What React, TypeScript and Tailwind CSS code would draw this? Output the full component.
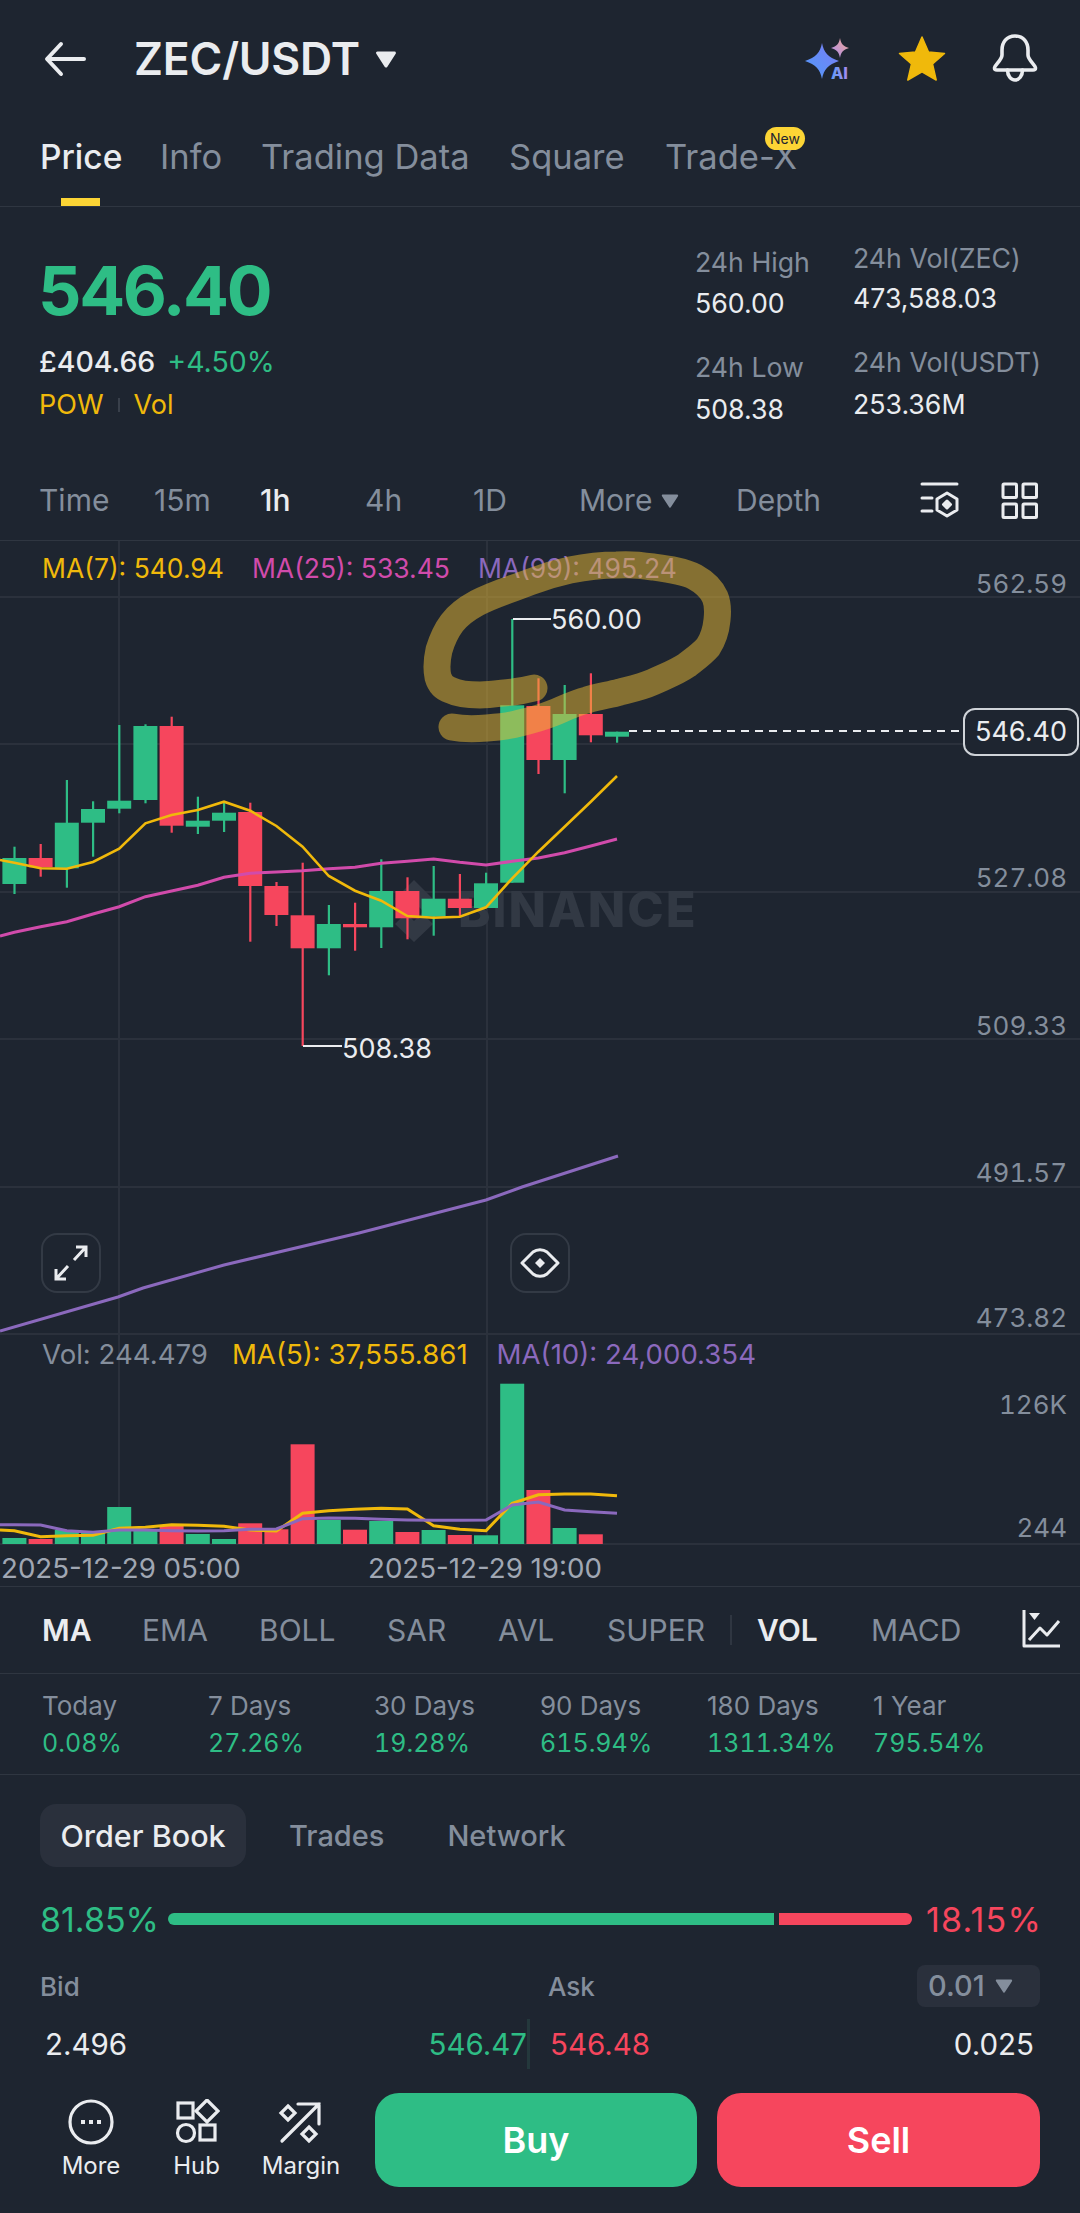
import React from "react"

const GREEN = "#2ebd85"
const RED = "#f6465d"
const YELLOW = "#f0b90b"
const PINK = "#d14bab"
const PURPLE = "#8b69bd"
const GRID = "#2b313c"

const cx = (i: number) => 14.4 + 26.2 * i

// wick top, wick bottom, body top, body bottom, up
const candles: [number, number, number, number, boolean][] = [
  [846.7, 894, 858, 884, true],
  [844, 876.7, 858, 867.3, false],
  [780, 887.7, 822.7, 868.3, true],
  [801.3, 856.7, 809, 822.7, true],
  [725, 813.3, 800.7, 808.7, true],
  [724.3, 803.3, 726, 800, true],
  [716.7, 832.7, 726, 825.7, false],
  [796.7, 834, 820.7, 826.7, true],
  [801.7, 832, 812.7, 820.7, true],
  [802.7, 941.7, 812, 886, false],
  [882, 926, 886, 915, false],
  [862.7, 1046, 915.3, 948.3, false],
  [905, 975.3, 924, 948.3, true],
  [902.7, 950.7, 924, 927.3, false],
  [859.3, 948, 891, 927.3, true],
  [877.3, 939.3, 891, 918.3, false],
  [866, 935.7, 898.7, 916.7, true],
  [874, 916.7, 898.7, 908, false],
  [872.7, 908, 883.3, 908, true],
  [619, 882.7, 705.3, 882.7, true],
  [678.3, 774, 706, 760, false],
  [685, 793.3, 714, 760, true],
  [673.3, 742.3, 714, 735.3, false],
  [731.7, 742.7, 731.7, 736.7, true],
]

const ma7 = [862.7, 868.3, 868.7, 862, 848.7, 823.3, 815, 810, 801.7, 810.7, 826, 846.7, 876, 890.7, 900.7, 916, 917.7, 916.7, 907.3, 878.3, 851.7, 826.7, 801.7, 776]
const ma25 = [932.3, 926.7, 921.7, 914, 906.7, 896.7, 891, 885.3, 877.3, 873.3, 872, 870.7, 868.7, 867.3, 863.3, 861.3, 859, 862.3, 865, 861.3, 858, 852.7, 846, 839]
const volBars = [1538, 1539, 1530, 1531.7, 1507, 1530, 1526, 1534, 1539, 1523.3, 1529.3, 1444.3, 1520, 1529.7, 1521, 1532, 1530, 1535, 1535.3, 1383.7, 1490, 1528, 1534.3]
const volMa5 = [1530.7, 1536.7, 1535.7, 1535.3, 1528.3, 1527.3, 1524.7, 1525.3, 1526.3, 1530, 1531, 1513.3, 1510.7, 1509.3, 1508.3, 1509, 1525.7, 1529.3, 1530.7, 1503.3, 1494.7, 1494, 1494, 1495.7]
const volMa10 = [1524.7, 1525, 1530.7, 1532.3, 1530, 1530, 1530.7, 1531, 1530.7, 1529.3, 1529, 1518.7, 1518, 1518.3, 1519.3, 1520, 1520.3, 1520.3, 1520, 1505, 1502, 1510, 1511.7, 1513.3]

const line = (ys: number[], startY: number) =>
  `0,${startY} ` + ys.map((y, i) => `${cx(i)},${y}`).join(" ")

const highlight =
  "M452 727 C462 729 475 729 487 728 C500 727 510 726 520 723 C533 720 543 717 553 713 C565 708 575 703 587 700 C600 696 610 695 620 692 C632 689 642 687 653 682 C666 676 677 672 687 665 C696 658 702 654 708 647 C714 638 716 630 717 620 C718 611 718 604 715 597 C711 588 704 582 695 577 C684 571 668 569 653 567 C640 565 628 564 617 565 C601 565 585 567 570 570 C556 573 543 577 530 582 C512 589 494 594 477 603 C466 609 458 615 452 623 C446 631 442 640 439 650 C437 659 436 668 438 677 C440 684 444 688 450 690 C458 694 469 695 480 695 C491 695 502 693 513 692 C521 691 530 689 534 688"

const Triangle = ({ className, color }: { className: string; color: string }) => (
  <svg className={className} viewBox="0 0 24 18">
    <path d="M3 2 H21 L12 16 Z" fill={color} stroke={color} strokeWidth="3" strokeLinejoin="round" />
  </svg>
)

const Header = () => (
  <div className="flex h-[118px] items-center pl-[44px]">
    <svg className="h-[36px] w-[44px]" viewBox="0 0 44 36" fill="none" stroke="#eaecef" strokeWidth="4" strokeLinecap="round" strokeLinejoin="round">
      <path d="M40 18 H4 M17 3 L3 18 L17 33" />
    </svg>
    <div className="ml-[46px] text-[44.500px] leading-[50px] font-semibold tracking-[-0.2px] text-[#eaecef]">ZEC/USDT</div>
    <Triangle className="ml-[14px] h-[17px] w-[24px]" color="#eaecef" />
    <svg className="ml-[406px] h-[48px] w-[58px]" viewBox="0 0 58 48">
      <defs>
        <linearGradient id="star1" x1="0" y1="1" x2="1" y2="0">
          <stop offset="0" stopColor="#4f9bf8" />
          <stop offset="1" stopColor="#7b7cf6" />
        </linearGradient>
        <linearGradient id="star2" x1="0" y1="1" x2="1" y2="0">
          <stop offset="0" stopColor="#a98bf4" />
          <stop offset="1" stopColor="#f2a98f" />
        </linearGradient>
        <linearGradient id="aiText" x1="0" y1="0" x2="1" y2="0">
          <stop offset="0" stopColor="#5f9df7" />
          <stop offset="1" stopColor="#a88bf0" />
        </linearGradient>
      </defs>
      <path d="M18 8 C20 18 24 22 35 26 C24 30 20 34 18 44 C16 34 12 30 1 26 C12 22 16 18 18 8 Z" fill="url(#star1)" />
      <path d="M36 3 C37 9 39 11 45 13 C39 15 37 17 36 23 C35 17 33 15 27 13 C33 11 35 9 36 3 Z" fill="url(#star2)" />
      <text x="27" y="44" fontSize="16" fontWeight="800" fill="url(#aiText)">AI</text>
    </svg>
    <svg className="ml-[36px] h-[48px] w-[48px]" viewBox="0 0 48 48">
      <path d="M24 2 L30.5 17 L46.5 18.5 L34.5 29 L38.2 45 L24 36.8 L9.8 45 L13.5 29 L1.5 18.5 L17.5 17 Z" fill={YELLOW} stroke={YELLOW} strokeWidth="1.5" strokeLinejoin="round" />
    </svg>
    <svg className="ml-[45px] h-[52px] w-[48px]" viewBox="0 0 48 52" fill="none" stroke="#eaecef" strokeWidth="3.6" strokeLinecap="round" strokeLinejoin="round">
      <path d="M24 3 C15.5 3 11 9.5 11 17 V22 C11 27 3.5 32 3.5 35 C3.5 36.5 4.5 37 6 37 H42 C43.5 37 44.5 36.5 44.5 35 C44.5 32 37 27 37 22 V17 C37 9.5 32.5 3 24 3 Z" />
      <path d="M16.5 37 C16.5 43 20 47 24 47 C28 47 31.500 43 31.500 37" />
    </svg>
  </div>
)

const Tabs = () => (
  <div className="flex h-[89px] border-b border-[#2f3641] pl-[40px] text-[34.500px] leading-[44px] text-[#848e9c]">
    <div className="flex w-[120px] flex-col pt-[17px]">
      <span className="text-[33.500px] font-medium text-[#eaecef]">Price</span>
      <span className="mt-[19px] ml-[21px] h-[8px] w-[39px] bg-[#fcd535]" />
    </div>
    <div className="w-[101px] pt-[17px]">Info</div>
    <div className="w-[248px] pt-[17px]">Trading Data</div>
    <div className="w-[156px] pt-[17px]">Square</div>
    <div className="relative w-[140px] pt-[17px]">
      Trade-X
      <span className="absolute top-[9px] left-[100px] flex h-[23px] w-[40px] items-center justify-center rounded-full bg-[#fcd535] text-[14px] leading-none text-[#1e2530]">New</span>
    </div>
  </div>
)

const Stats = () => (
  <div className="flex h-[254px] text-[26.700px] leading-[36px]">
    <div className="w-[695px] pl-[38px] text-[28.500px]">
      <div className="mt-[47px] text-[68px] leading-[72px] font-bold tracking-[-2.300px] text-[#2ebd85]">546.40</div>
      <div className="mt-[18px] ml-[1px] flex">
        <span className="font-medium text-[#eaecef]">£404.66</span>
        <span className="ml-[12px] text-[#2ebd85]">+4.50%</span>
      </div>
      <div className="mt-[7px] ml-[1px] flex items-center text-[27px] text-[#f0b90b]">
        <span>POW</span>
        <span className="mx-[14px] h-[14px] w-[2px] bg-[#39404b]" />
        <span>Vol</span>
      </div>
    </div>
    <div className="w-[158px]">
      <div className="mt-[37px] text-[#848e9c]">24h High</div>
      <div className="mt-[5px] text-[#eaecef]">560.00</div>
      <div className="mt-[28px] text-[#848e9c]">24h Low</div>
      <div className="mt-[6px] text-[#eaecef]">508.38</div>
    </div>
    <div>
      <div className="mt-[33px] text-[#848e9c]">24h Vol(ZEC)</div>
      <div className="mt-[4px] text-[#eaecef]">473,588.03</div>
      <div className="mt-[28px] text-[#848e9c]">24h Vol(USDT)</div>
      <div className="mt-[6px] text-[#eaecef]">253.36M</div>
    </div>
  </div>
)

const Intervals = () => (
  <div className="flex h-[80px] items-center border-b border-[#2f3641] pl-[39px] text-[30px] text-[#848e9c]">
    <span className="w-[115px]">Time</span>
    <span className="w-[106px]">15m</span>
    <span className="w-[105px] font-medium text-[#eaecef]">1h</span>
    <span className="w-[108px]">4h</span>
    <span className="w-[106px]">1D</span>
    <span className="flex w-[157px] items-center">
      More
      <Triangle className="ml-[8px] h-[14px] w-[20px]" color="#848e9c" />
    </span>
    <span className="w-[184px]">Depth</span>
    <svg className="h-[40px] w-[40px]" viewBox="0 0 40 40" fill="none" stroke="#eaecef" strokeWidth="3" strokeLinecap="round" strokeLinejoin="round">
      <path d="M2 3 H37 M2 17 H12 M2 30 H12" />
      <path d="M27 12 L37 18 V29 L27 35 L17 29 V18 Z" />
      <path d="M27 20 L30.500 23.500 L27 27 L23.500 23.500 Z" fill="#eaecef" />
    </svg>
    <svg className="ml-[41px] h-[38px] w-[38px]" viewBox="0 0 38 38" fill="none" stroke="#eaecef" strokeWidth="3">
      <rect x="2" y="2" width="13.500" height="13.500" rx="1" />
      <rect x="22" y="2" width="13.500" height="13.500" rx="1" />
      <rect x="2" y="22" width="13.500" height="13.500" rx="1" />
      <rect x="22" y="22" width="13.500" height="13.500" rx="1" />
    </svg>
  </div>
)

const Chart = () => (
  <div className="relative h-[1046px] border-b border-[#2f3641]">
    <svg className="absolute inset-0" width="1080" height="1046" viewBox="0 541 1080 1046">
      {[597, 744, 892, 1039, 1187, 1334, 1544].map((y) => (
        <line key={y} x1="0" x2="1080" y1={y} y2={y} stroke={GRID} strokeWidth="2" />
      ))}
      {[119, 487].map((x) => (
        <line key={x} x1={x} x2={x} y1="541" y2="1544" stroke={GRID} strokeWidth="2" />
      ))}

      {/* watermark */}
      <g fill="#323944">
        <path d="M414 880 L433 899 L422 910 L414 902 L406 910 L395 899 Z" />
        <path d="M395 924 L406 913 L414 921 L422 913 L433 924 L414 942 Z" />
      </g>
      <text x="458" y="927" fontSize="49" fontWeight="800" letterSpacing="2" fill="#323944">BINANCE</text>

      {candles.map(([wt, wb, bt, bb, up], i) => (
        <g key={i} fill={up ? GREEN : RED}>
          <rect x={cx(i) - 1} y={wt} width="2.200" height={wb - wt} />
          <rect x={cx(i) - 12} y={bt} width="24" height={Math.max(bb - bt, 2)} />
        </g>
      ))}

      <polyline points={line(ma25, 936)} fill="none" stroke={PINK} strokeWidth="3" />
      <polyline points={line(ma7, 860)} fill="none" stroke={YELLOW} strokeWidth="2.600" />
      <polyline points="0,1331 118,1297 143,1288 224,1265 359,1233 486,1200 522,1187 618,1156" fill="none" stroke={PURPLE} strokeWidth="3" />

      <path d="M513 619 H551 M303 1046 H342" stroke="#eaecef" strokeWidth="2" fill="none" />
      <line x1="629" x2="963" y1="731" y2="731" stroke="#eaecef" strokeWidth="2" strokeDasharray="8 6" />

      {volBars.map((top, i) => (
        <rect key={i} x={cx(i) - 12} y={top} width="24" height={1544 - top} fill={candles[i][4] ? GREEN : RED} />
      ))}
      <polyline points={line(volMa5, 1530)} fill="none" stroke={YELLOW} strokeWidth="3" />
      <polyline points={line(volMa10, 1524.7)} fill="none" stroke={PURPLE} strokeWidth="3" />

      <g className="tabular-nums" fontSize="26" fill="#848e9c" textAnchor="end">
        <text x="1067" y="593">562.59</text>
        <text x="1067" y="887">527.08</text>
        <text x="1067" y="1035">509.33</text>
        <text x="1067" y="1182">491.57</text>
        <text x="1067" y="1327">473.82</text>
        <text x="1067" y="1414">126K</text>
        <text x="1067" y="1537">244</text>
      </g>
      <g fontSize="27" fill="#eaecef">
        <text x="551" y="629">560.00</text>
        <text x="342" y="1058">508.38</text>
      </g>
      <g fontSize="27.700" fill="#a0a7b3">
        <text x="1" y="1578">2025-12-29 05:00</text>
        <text x="368" y="1578">2025-12-29 19:00</text>
      </g>
    </svg>

    <div className="absolute top-[9px] left-[42px] flex gap-[28px] text-[26.500px] leading-[36px]">
      <span className="text-[#f0b90b]">MA(7): 540.94</span>
      <span className="text-[#d14bab]">MA(25): 533.45</span>
      <span className="text-[#8b69bd]">MA(99): 495.24</span>
    </div>
    <div className="absolute top-[795px] left-[42px] flex text-[27.600px] leading-[36px]">
      <span className="text-[#848e9c]">Vol: 244.479</span>
      <span className="ml-[24px] text-[#f0b90b]">MA(5): 37,555.861</span>
      <span className="ml-[29px] text-[#8b69bd]">MA(10): 24,000.354</span>
    </div>

    <div className="absolute top-[167px] right-[1px] flex h-[48px] w-[116px] items-center justify-center rounded-[12px] border-2 border-[#cfd3d8] bg-[#1e2530] text-[27px] text-[#eaecef]">
      546.40
    </div>

    <div className="absolute top-[692px] left-[41px] flex h-[60px] w-[60px] items-center justify-center rounded-[16px] border-2 border-[#333a45]">
      <svg className="h-[40px] w-[40px]" viewBox="0 0 40 40" fill="none" stroke="#eaecef" strokeWidth="3">
        <path d="M23 17 L35 4 M25 4 H35 V14 M17 23 L5 36 M5 26 V36 H15" />
      </svg>
    </div>
    <div className="absolute top-[692px] left-[510px] flex h-[60px] w-[60px] items-center justify-center rounded-[16px] border-2 border-[#333a45]">
      <svg className="h-[30px] w-[40px]" viewBox="0 0 40 30" fill="none" stroke="#eaecef" strokeWidth="3" strokeLinejoin="round">
        <path d="M2 15 L13 4 C17 1 23 1 27 4 L38 15 L27 26 C23 29 17 29 13 26 Z" />
        <path d="M20 10 L25 15 L20 20 L15 15 Z" fill="#eaecef" stroke="none" />
      </svg>
    </div>

    {/* marker scribble, sits over everything in the chart */}
    <svg className="pointer-events-none absolute inset-0" width="1080" height="1046" viewBox="0 541 1080 1046">
      <path d={highlight} fill="none" stroke="#ecbc34" strokeOpacity="0.5" strokeWidth="27" strokeLinecap="round" strokeLinejoin="round" />
    </svg>
  </div>
)

const Indicators = () => (
  <div className="flex h-[87px] items-center border-b border-[#2f3641] pl-[42px] text-[30px] text-[#848e9c]">
    <span className="w-[100px] font-semibold text-[#eaecef]">MA</span>
    <span className="w-[117px]">EMA</span>
    <span className="w-[128px]">BOLL</span>
    <span className="w-[111px]">SAR</span>
    <span className="w-[109px]">AVL</span>
    <span className="w-[123px]">SUPER</span>
    <span className="h-[30px] w-[27px] border-l-2 border-[#2f3641]" />
    <span className="w-[114px] font-semibold text-[#eaecef]">VOL</span>
    <span className="w-[151px]">MACD</span>
    <svg className="h-[40px] w-[40px]" viewBox="0 0 40 40" fill="none" stroke="#eaecef" strokeWidth="3" strokeLinejoin="round">
      <path d="M2 0 V36 H38" />
      <path d="M7 30 L18 18 L25 25 L37 11" />
      <path d="M7 3 H18 L12.500 10 Z" fill="#eaecef" stroke="none" />
    </svg>
  </div>
)

const periods = [
  ["Today", "0.08%", "w-[166px]"],
  ["7 Days", "27.26%", "w-[166px]"],
  ["30 Days", "19.28%", "w-[166px]"],
  ["90 Days", "615.94%", "w-[167px]"],
  ["180 Days", "1311.34%", "w-[166px]"],
  ["1 Year", "795.54%", "w-[166px]"],
]

const Periods = () => (
  <div className="flex h-[101px] border-b border-[#2f3641] pt-[14px] pl-[42px] text-[26px] leading-[36px]">
    {periods.map(([label, value, width]) => (
      <div key={label} className={width}>
        <div className="text-[#848e9c]">{label}</div>
        <div className="mt-[1px] text-[25px] text-[#2ebd85] tabular-nums">{value}</div>
      </div>
    ))}
  </div>
)

const OrderBook = () => (
  <div className="px-[40px] pt-[29px]">
    <div className="flex h-[63px] items-center text-[29px] font-medium text-[#848e9c]">
      <span className="flex h-[63px] w-[206px] items-center justify-center rounded-[16px] bg-[#2a303c] text-[30.500px] text-[#eaecef]">Order Book</span>
      <span className="ml-[43px] pt-[1px]">Trades</span>
      <span className="ml-[63px] pt-[1px]">Network</span>
    </div>
    <div className="mt-[34px] flex h-[36px] items-center text-[34px]">
      <span className="w-[128px] shrink-0 text-[#2ebd85]">81.85%</span>
      <span className="h-[12px] w-[606px] shrink-0 rounded-l-full bg-[#2ebd85]" />
      <span className="ml-[5px] h-[12px] w-[133px] shrink-0 rounded-r-full bg-[#f6465d]" />
      <span className="ml-[14px] shrink-0 tracking-[1.200px] text-[#f6465d]">18.15%</span>
    </div>
    <div className="mt-[28px] flex h-[42px] items-center text-[26px] font-medium text-[#848e9c]">
      <span className="w-[508px]">Bid</span>
      <span className="w-[369px]">Ask</span>
      <span className="flex h-[42px] w-[123px] items-center rounded-[8px] bg-[#2a303c] pl-[11px] text-[29px]">
        0.01
        <Triangle className="ml-[9px] h-[14px] w-[20px]" color="#848e9c" />
      </span>
    </div>
    <div className="mt-[12px] flex h-[50px] items-center text-[29.500px]">
      <div className="flex h-[50px] w-[490px] items-center justify-between border-r-[3px] border-[#24383c] pl-[5px]">
        <span className="text-[#eaecef]">2.496</span>
        <span className="text-[#2ebd85]">546.47</span>
      </div>
      <div className="ml-[20px] flex flex-1 items-center justify-between pr-[6px]">
        <span className="text-[#f6465d]">546.48</span>
        <span className="text-[#eaecef]">0.025</span>
      </div>
    </div>
  </div>
)

const Footer = () => (
  <div className="mt-[24px] flex h-[94px] pl-[38px] text-[#eaecef]">
    <div className="flex w-[106px] flex-col items-center">
      <svg className="mt-[6px] h-[46px] w-[46px]" viewBox="0 0 46 46" fill="none" stroke="#eaecef" strokeWidth="3.200">
        <circle cx="23" cy="23" r="21" />
        <path d="M13 23 H17 M21 23 H25 M29 23 H33" strokeWidth="4" />
      </svg>
      <span className="mt-[5px] text-[24px] leading-[32px]">More</span>
    </div>
    <div className="flex w-[105px] flex-col items-center">
      <svg className="mt-[6px] h-[46px] w-[46px]" viewBox="0 0 46 46" fill="none" stroke="#eaecef" strokeWidth="3.200">
        <rect x="4" y="4" width="15" height="15" />
        <path d="M33 1 L44 12 L33 23 L22 12 Z" />
        <circle cx="12" cy="34" r="8.500" />
        <rect x="26" y="26" width="15" height="15" />
      </svg>
      <span className="mt-[5px] text-[24px] leading-[32px]">Hub</span>
    </div>
    <div className="flex w-[104px] flex-col items-center">
      <svg className="mt-[6px] h-[46px] w-[46px]" viewBox="0 0 46 46" fill="none" stroke="#eaecef" strokeWidth="3.200" strokeLinecap="round">
        <path d="M4 42 L41 5 M20 5 H41 V25" />
        <path d="M10 7 L17 14 L10 21 L3 14 Z M31 28 L38 35 L31 42 L24 35 Z" strokeLinecap="butt" />
      </svg>
      <span className="mt-[5px] text-[24px] leading-[32px]">Margin</span>
    </div>
    <button className="ml-[22px] h-[94px] w-[322px] rounded-[24px] bg-[#2ebd85] text-[36px] font-semibold text-white">Buy</button>
    <button className="ml-[20px] h-[94px] w-[323px] rounded-[24px] bg-[#f6465d] text-[36px] font-semibold text-white">Sell</button>
  </div>
)

export default function App() {
  return (
    <div className="h-[2213px] w-[1080px] overflow-hidden bg-[#1e2530] font-['Inter',sans-serif]">
      <Header />
      <Tabs />
      <Stats />
      <Intervals />
      <Chart />
      <Indicators />
      <Periods />
      <OrderBook />
      <Footer />
    </div>
  )
}
